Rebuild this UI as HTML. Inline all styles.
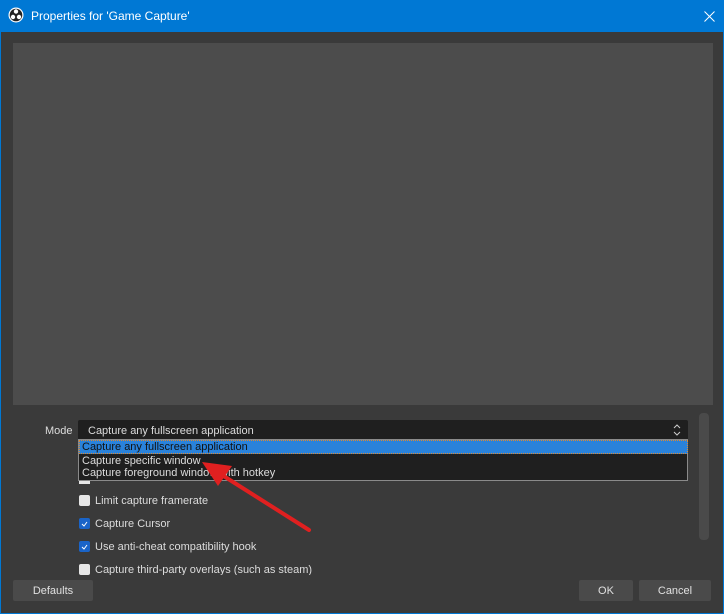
<!DOCTYPE html><html><head><style>
body{margin:0;width:724px;height:614px;background:#0078d4;font-family:"Liberation Sans",sans-serif;overflow:hidden;position:relative}
.a{position:absolute}
.t{color:#dcdcdc;font-size:11px;white-space:nowrap}
.cb{position:absolute;left:79px;width:11px;height:11px;border-radius:2px;background:#e6e6e6}
.ck{background:#1a64c8}
.btn{position:absolute;top:580px;height:21px;background:#4a4a4a;border-radius:2px;color:#e0e0e0;font-size:11px;text-align:center;line-height:22px}
</style></head><body>
<div class="a" style="left:1px;top:32px;width:722px;height:581px;background:#3a3a3a"></div>
<svg class="a" style="left:8px;top:7px" width="16" height="16" viewBox="0 0 16 16"><circle cx="8" cy="8" r="7.5" fill="#fff"/><circle cx="8" cy="8" r="6.3" fill="#222"/><circle cx="8" cy="4.5" r="2.2" fill="#fff"/><circle cx="5" cy="10" r="2.2" fill="#fff"/><circle cx="11" cy="10" r="2.2" fill="#fff"/></svg>
<div class="a" style="left:31px;top:9px;color:#fff;font-size:12px">Properties for 'Game Capture'</div>
<svg class="a" style="left:704px;top:11px" width="11" height="11"><path d="M0.5 0.5L10.5 10.5M10.5 0.5L0.5 10.5" stroke="#fff" stroke-width="1"/></svg>
<div class="a" style="left:13px;top:43px;width:700px;height:362px;background:#4c4c4c"></div>
<div class="a t" style="left:45px;top:425px">Mode</div>
<div class="a" style="left:78px;top:420px;width:610px;height:20px;background:#1f1f1f;border-radius:2px"></div>
<div class="a t" style="left:88px;top:425px">Capture any fullscreen application</div>
<svg class="a" style="left:673px;top:424px" width="8" height="12"><path d="M1 4L4 1L7 4M1 8L4 11L7 8" stroke="#ccc" fill="none"/></svg>
<div class="a" style="left:699px;top:413px;width:10px;height:127px;background:#4a4a4a;border-radius:4px"></div>
<div class="a" style="left:78px;top:439px;width:608px;height:40px;background:#1f1f1f;border:1px solid #8a8a8a"></div>
<div class="a" style="left:79px;top:440px;width:607px;height:12px;background:#2a82da;border:1px dotted #e08a30"></div>
<div class="a t" style="left:82px;top:441px;color:#111">Capture any fullscreen application</div>
<div class="a t" style="left:82px;top:455px">Capture specific window</div>
<div class="a t" style="left:82px;top:467px">Capture foreground window with hotkey</div>
<div class="cb" style="top:481px;height:3px;border-radius:0"></div>
<div class="cb" style="top:495px"></div><div class="a t" style="left:95px;top:495px">Limit capture framerate</div>
<div class="cb ck" style="top:518px"></div><svg class="a" style="left:79px;top:518px" width="11" height="11"><path d="M3 6L5 8L8 4" stroke="#fff" fill="none"/></svg><div class="a t" style="left:95px;top:518px">Capture Cursor</div>
<div class="cb ck" style="top:541px"></div><svg class="a" style="left:79px;top:541px" width="11" height="11"><path d="M3 6L5 8L8 4" stroke="#fff" fill="none"/></svg><div class="a t" style="left:95px;top:541px">Use anti-cheat compatibility hook</div>
<div class="cb" style="top:564px"></div><div class="a t" style="left:95px;top:564px;height:11px;overflow:hidden">Capture third-party overlays (such as steam)</div>
<div class="btn" style="left:13px;width:80px">Defaults</div>
<div class="btn" style="left:579px;width:54px">OK</div>
<div class="btn" style="left:639px;width:72px">Cancel</div>
<svg class="a" style="left:0;top:0" width="724" height="614"><line x1="309" y1="530" x2="222" y2="475" stroke="#e02020" stroke-width="4" stroke-linecap="round"/><polygon points="202,462 232,466 218,486" fill="#e02020"/></svg>
</body></html>
